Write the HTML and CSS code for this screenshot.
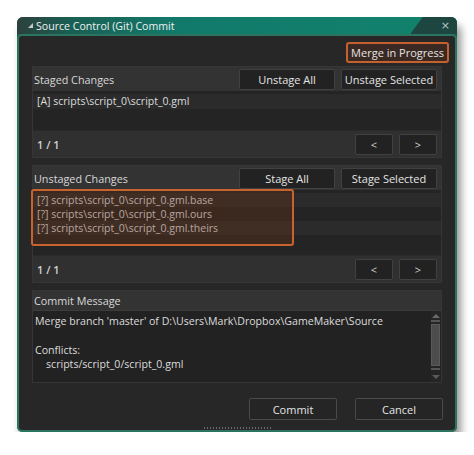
FILE: index.html
```html
<!DOCTYPE html>
<html lang="en">
  <head>
    <meta charset="UTF-8" />
    <title>Source Control (Git) Commit</title>
    <link rel="stylesheet" href="styles.css">
  </head>
  <body>
    <div class="window">
      <div class="titlebar">
        <span class="tri"></span>
        <span class="title">Source Control (Git) Commit</span>
        <span class="tab"><span class="close">×</span></span>
      </div>
      <div class="body">
        <div class="top-row">
          <button class="merge">Merge in Progress</button>
        </div>

        <div class="section">
          <div class="sec-head">
            <span>Staged Changes</span>
            <div class="btns">
              <button class="btn wide">Unstage All</button>
              <button class="btn wide">Unstage Selected</button>
            </div>
          </div>
          <div class="list staged">
            <div class="row">[A] scripts\script_0\script_0.gml</div>
          </div>
          <div class="pager">
            <span class="count">1 / 1</span>
            <div class="btns">
              <button class="btn nav">&lt;</button>
              <button class="btn nav">&gt;</button>
            </div>
          </div>
        </div>

        <div class="section">
          <div class="sec-head">
            <span>Unstaged Changes</span>
            <div class="btns">
              <button class="btn wide">Stage All</button>
              <button class="btn wide">Stage Selected</button>
            </div>
          </div>
          <div class="list unstaged">
            <div class="row">[?] scripts\script_0\script_0.gml.base</div>
            <div class="row">[?] scripts\script_0\script_0.gml.ours</div>
            <div class="row">[?] scripts\script_0\script_0.gml.theirs</div>
            <div class="highlight"></div>
          </div>
          <div class="pager">
            <span class="count">1 / 1</span>
            <div class="btns">
              <button class="btn nav">&lt;</button>
              <button class="btn nav">&gt;</button>
            </div>
          </div>
        </div>

        <div class="section commit">
          <div class="sec-head small">
            <span>Commit Message</span>
          </div>
          <div class="message-box">
            <div class="message">Merge branch 'master' of D:\Users\Mark\Dropbox\GameMaker\Source

Conflicts:
    scripts/script_0/script_0.gml</div>
            <div class="scrollbar">
              <span class="arrow up"></span>
              <span class="cap"></span>
              <span class="thumb"></span>
              <span class="cap"></span>
              <span class="arrow down"></span>
            </div>
          </div>
        </div>

        <div class="footer">
          <button class="btn big">Commit</button>
          <button class="btn big">Cancel</button>
        </div>
        <div class="grip"></div>
      </div>
    </div>
  </body>
</html>
```

FILE: styles.css
```css
body {
  margin: 0;
  padding: 17px 0 0 17px;
  background-color: #ffffff;
  font-family: "Open Sans", "DejaVu Sans", sans-serif;
  font-size: 11px;
  color: #dcdcdc;
}

.window {
  width: 440px;
  height: 415px;
  display: flex;
  flex-direction: column;
  border-radius: 6px;
  background-color: #1f5a4c;
  box-shadow: 4px 8px 8px rgba(0, 0, 0, 0.42);
}

/* Title bar */
.titlebar {
  height: 18px;
  display: flex;
  align-items: center;
  padding-left: 11px;
  border-radius: 6px 6px 0 0;
  overflow: hidden;
  background: linear-gradient(to right, #2c403d 0, #1a5f53 12%, #12796a 35%, #11836d 100%);
}
.tri {
  width: 0;
  height: 0;
  border-left: 5px solid transparent;
  border-bottom: 5px solid #c8c8c8;
  margin-right: 3px;
}
.title {
  font-size: 10.6px;
  color: #f0f0f0;
}
.tab {
  margin-left: auto;
  width: 47px;
  height: 18px;
  display: flex;
  align-items: center;
  justify-content: flex-end;
  padding-right: 7px;
  box-sizing: border-box;
  background-color: #1d4640;
  clip-path: polygon(13px 0, 100% 0, 100% 100%, 0 100%);
}
.close {
  font-family: "DejaVu Sans", sans-serif;
  font-size: 11px;
  color: #b8c4c2;
}

/* Body */
.body {
  flex: 1;
  display: flex;
  flex-direction: column;
  padding: 6px 13px 0;
  border: 2px solid #2b7560;
  border-radius: 5px;
  background-color: #272727;
}

button {
  font-family: "Open Sans", "DejaVu Sans", sans-serif;
  font-size: 11px;
  color: #e4e4e4;
  padding: 0;
  cursor: pointer;
}

.top-row {
  display: flex;
  justify-content: flex-end;
  margin-right: -7px;
}
.merge {
  width: 103px;
  height: 21px;
  background-color: #3a2922;
  border: 2px solid #c4612e;
  border-radius: 3px;
  font-size: 11px;
}

.btn {
  height: 21px;
  background-color: #222222;
  border: 1px solid #414141;
  border-radius: 2px;
}
.btn.wide {
  width: 96px;
}
.btn.nav {
  width: 38px;
  color: #cfcfcf;
}
.btn.big {
  width: 88px;
  height: 22px;
  background-color: #252525;
  border-color: #4a4a4a;
}

/* Sections */
.section {
  display: flex;
  flex-direction: column;
  margin-top: 3px;
  border: 1px solid #363636;
}
.section + .section {
  margin-top: 7px;
}
.sec-head {
  height: 24px;
  display: flex;
  align-items: center;
  justify-content: space-between;
  padding: 0 4px 0 1px;
  background-color: #333333;
  color: #d8d8d8;
  font-size: 10.8px;
}
.sec-head.small {
  height: 19px;
  border-bottom: 1px solid #3c3c3c;
}
.btns {
  display: flex;
  gap: 6px;
}

.list {
  position: relative;
  padding-top: 3px;
  background-color: #242424;
  font-size: 10.5px;
}
.list.staged {
  height: 36px;
}
.list.unstaged {
  height: 62px;
}
.row {
  height: 14px;
  line-height: 14px;
  padding-left: 4px;
  white-space: nowrap;
}
.row:nth-child(odd) {
  background-color: #2b2b2b;
}
.list.staged .row {
  height: 15px;
  line-height: 15px;
}

/* Annotation over the conflicting files */
.highlight {
  position: absolute;
  left: -2px;
  top: -1px;
  width: 259px;
  height: 53px;
  border: 2px solid #c8632f;
  border-radius: 3px;
  background-color: rgba(110, 50, 22, 0.32);
}

.pager {
  height: 26px;
  display: flex;
  align-items: center;
  justify-content: space-between;
  padding: 0 4px 0 4px;
  background-color: #303030;
  border-top: 1px solid #2a2a2a;
}
.count {
  font-weight: 600;
  color: #d0d0d0;
}

/* Commit message */
.message-box {
  height: 71px;
  display: flex;
  background-color: #222222;
}
.message {
  flex: 1;
  padding: 3px 2px;
  line-height: 14.3px;
  white-space: pre;
  color: #dcdcdc;
  font-size: 10.6px;
}
.scrollbar {
  width: 9px;
  margin-right: 1px;
  display: flex;
  flex-direction: column;
  align-items: center;
  padding-top: 3px;
  background-color: #252525;
}
.arrow {
  width: 0;
  height: 0;
  border-left: 4px solid transparent;
  border-right: 4px solid transparent;
}
.arrow.up {
  border-bottom: 4px solid #6a6a6a;
}
.arrow.down {
  border-top: 4px solid #5a5a5a;
  margin-top: 3px;
}
.cap {
  width: 9px;
  height: 2px;
  margin: 2px 0;
  background-color: #555555;
}
.thumb {
  width: 9px;
  height: 42px;
  background-color: #4c4c4c;
  border: 1px solid #5a5a5a;
  box-sizing: border-box;
}

/* Footer */
.footer {
  display: flex;
  justify-content: flex-end;
  gap: 18px;
  margin-top: 15px;
  margin-right: -1px;
}
.grip {
  width: 67px;
  height: 2px;
  margin: 7px auto 1px;
  background: repeating-linear-gradient(to right, #6a6a6a 0 1px, transparent 1px 3px);
}
```
